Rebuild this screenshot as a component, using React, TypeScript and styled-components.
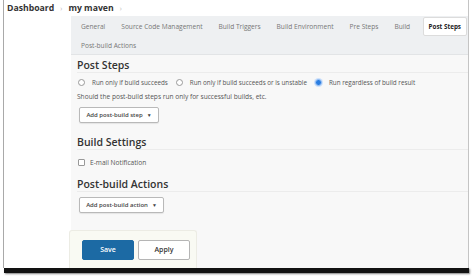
import styled, { createGlobalStyle } from "styled-components";

const Global = createGlobalStyle`
  html, body {
    margin: 0;
    padding: 0;
    background: #ffffff;
    font-family: "Open Sans", "Noto Sans", sans-serif;
    color: #333;
  }
  body {
    min-height: 280px;
  }
`;

const Frame = styled.div`
  margin-left: 3px;
  width: 464px;
  height: 268px;
  border-left: 1px solid #a9a9a9;
  border-right: 1px solid #c4c4c4;
  display: flex;
  flex-direction: column;
  background: #fff;
  overflow: hidden;
`;

const Shadow = styled.div`
  margin-left: 4px;
  width: 465px;
  height: 5px;
  background: #121212;
  box-shadow: 1px 1px 2px rgba(0, 0, 0, 0.5);
`;

const Crumbs = styled.div`
  height: 16px;
  display: flex;
  align-items: center;
  padding-left: 3px;
  gap: 6px;
  font-size: 8.7px;
  font-weight: 700;
  color: #333;
`;

const Sep = styled.span`
  color: #bbb;
  font-weight: 400;
  font-size: 7px;
`;

const Body = styled.div`
  flex: 1;
  display: grid;
  grid-template-columns: 67px 1fr;
`;

const Side = styled.div`
  background: #fff;
`;

const Main = styled.div`
  display: flex;
  flex-direction: column;
  background: #f8f8f8;
  position: relative;
`;

const Tabs = styled.div`
  background: #eef0f2;
  display: flex;
  flex-wrap: wrap;
  align-items: center;
  padding: 1px 1px 0 2px;
  height: 39px;
  box-sizing: border-box;
  border-bottom: 1px solid #e2e4e6;
`;

const Tab = styled.div<{ $active?: boolean }>`
  height: 19px;
  display: flex;
  align-items: center;
  padding: 0 ${(p) => (p.$active ? "5px" : "7px")};
  margin-left: ${(p) => (p.$active ? "auto" : "0")};
  white-space: nowrap;
  font-size: ${(p) => (p.$active ? "6.3px" : "6.6px")};
  color: ${(p) => (p.$active ? "#222" : "#777")};
  font-weight: ${(p) => (p.$active ? 700 : 400)};
  background: ${(p) => (p.$active ? "#fff" : "transparent")};
  border: 1px solid ${(p) => (p.$active ? "#dcdcdc" : "transparent")};
  border-radius: 2px;
  box-sizing: border-box;
`;

const Content = styled.div`
  padding: 0 0 0 6px;
  flex: 1;
`;

const Heading = styled.div<{ $top?: number }>`
  font-size: 10.5px;
  font-weight: 600;
  color: #333;
  height: 17px;
  display: flex;
  align-items: flex-end;
  border-bottom: 1px solid #ececec;
  margin-top: ${(p) => p.$top ?? 0}px;
`;

const RadioRow = styled.div`
  display: flex;
  align-items: center;
  margin-top: 5px;
  padding-left: 1px;
  font-size: 6.3px;
  color: #555;
`;

const Radio = styled.span<{ $on?: boolean; $first?: boolean }>`
  width: 5px;
  height: 5px;
  border-radius: 50%;
  border: 1px solid ${(p) => (p.$on ? "#9cc3f5" : "#999")};
  background: ${(p) => (p.$on ? "#2a7de1" : "#fff")};
  box-shadow: ${(p) => (p.$on ? "0 0 0 1px #cfe2fb" : "none")};
  margin: 0 7px 0 ${(p) => (p.$first ? 0 : 8)}px;
`;

const Hint = styled.div`
  font-size: 6.6px;
  color: #555;
  margin-top: 5px;
`;

const AddBtn = styled.div<{ $w: number; $top: number }>`
  width: ${(p) => p.$w}px;
  height: 16px;
  margin: ${(p) => p.$top}px 0 0 2px;
  box-sizing: border-box;
  border: 1px solid #b9b9b9;
  border-radius: 2px;
  background: #fff;
  display: flex;
  align-items: center;
  justify-content: center;
  gap: 4px;
  font-size: 6px;
  font-weight: 600;
  color: #444;
  box-shadow: 0 1px 1px rgba(0, 0, 0, 0.08);
`;

const Caret = styled.span`
  font-size: 5px;
`;

const CheckRow = styled.div`
  display: flex;
  align-items: center;
  gap: 5px;
  margin-top: 8px;
  padding-left: 1px;
  font-size: 6.6px;
  color: #555;
`;

const Check = styled.span`
  width: 5px;
  height: 5px;
  border: 1px solid #999;
  border-radius: 1px;
  background: #fff;
`;

const Bottom = styled.div`
  position: absolute;
  left: -2px;
  bottom: 0;
  width: 128px;
  height: 38px;
  box-sizing: border-box;
  background: #f9faf3;
  border: 1px solid #ecece4;
  border-bottom: none;
  border-radius: 3px 3px 0 0;
  display: flex;
  align-items: center;
  padding-left: 12px;
  gap: 4px;
`;

const Btn = styled.div<{ $primary?: boolean }>`
  width: 52px;
  height: 20px;
  box-sizing: border-box;
  border-radius: 2px;
  display: flex;
  align-items: center;
  justify-content: center;
  font-size: 7px;
  font-weight: 600;
  color: ${(p) => (p.$primary ? "#fff" : "#333")};
  background: ${(p) => (p.$primary ? "#1c6aa4" : "#fff")};
  border: 1px solid ${(p) => (p.$primary ? "#1c6aa4" : "#b5b5b5")};
`;

export default function App() {
  return (
    <>
      <Global />
      <Frame>
        <Crumbs>
          <span>Dashboard</span>
          <Sep>›</Sep>
          <span>my maven</span>
          <Sep>›</Sep>
        </Crumbs>
        <Body>
          <Side />
          <Main>
            <Tabs>
              <Tab>General</Tab>
              <Tab>Source Code Management</Tab>
              <Tab>Build Triggers</Tab>
              <Tab>Build Environment</Tab>
              <Tab>Pre Steps</Tab>
              <Tab>Build</Tab>
              <Tab $active>Post Steps</Tab>
              <Tab>Post-build Actions</Tab>
            </Tabs>
            <Content>
              <Heading>Post Steps</Heading>
              <RadioRow>
                <Radio $first />
                <span>Run only if build succeeds</span>
                <Radio />
                <span>Run only if build succeeds or is unstable</span>
                <Radio $on />
                <span>Run regardless of build result</span>
              </RadioRow>
              <Hint>Should the post-build steps run only for successful builds, etc.</Hint>
              <AddBtn $w={80} $top={6}>
                Add post-build step <Caret>▼</Caret>
              </AddBtn>
              <Heading $top={9}>Build Settings</Heading>
              <CheckRow>
                <Check />
                <span>E-mail Notification</span>
              </CheckRow>
              <Heading $top={7}>Post-build Actions</Heading>
              <AddBtn $w={85} $top={5}>
                Add post-build action <Caret>▼</Caret>
              </AddBtn>
            </Content>
            <Bottom>
              <Btn $primary>Save</Btn>
              <Btn>Apply</Btn>
            </Bottom>
          </Main>
        </Body>
      </Frame>
      <Shadow />
    </>
  );
}
